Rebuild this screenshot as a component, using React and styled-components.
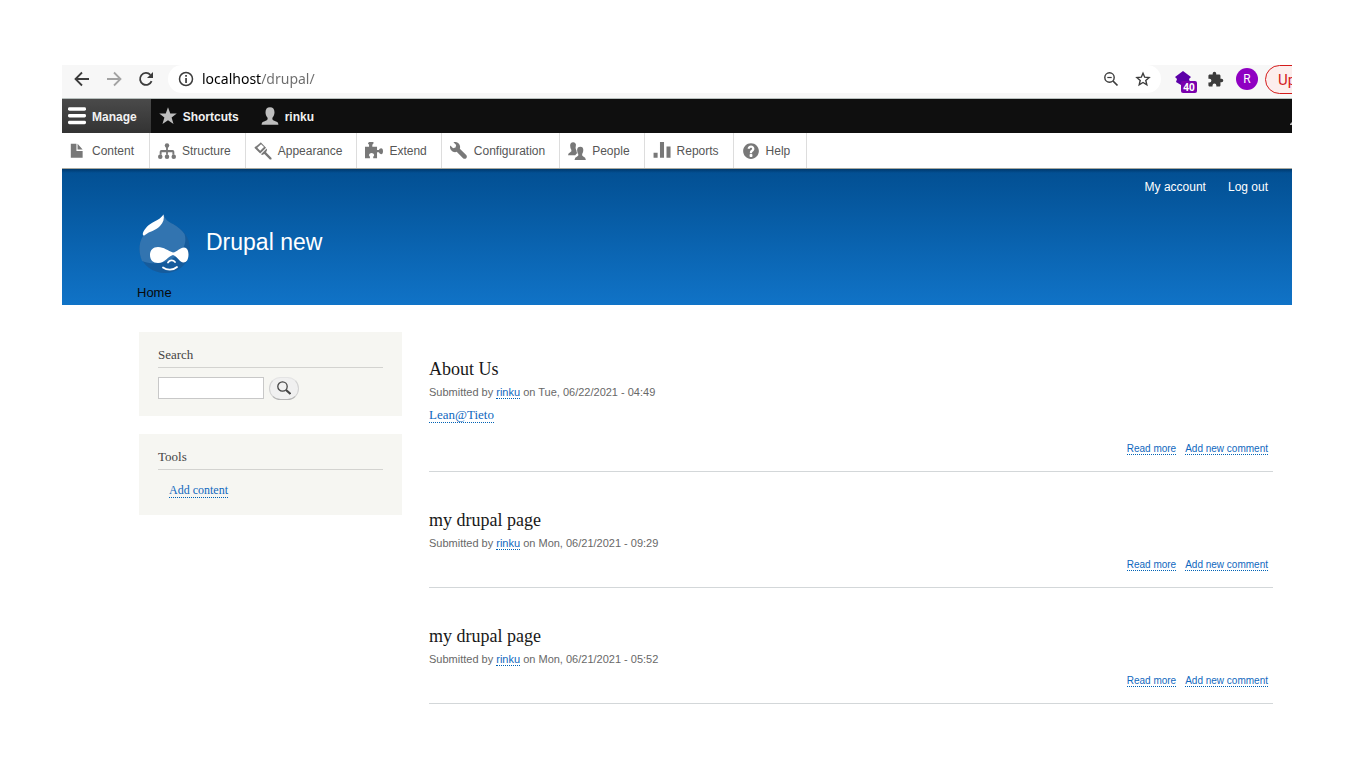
import React from 'react'
import styled, { createGlobalStyle, css } from 'styled-components'

const GlobalStyle = createGlobalStyle`
    *, *::before, *::after {
        box-sizing: border-box;
    }

    body {
        margin: 0;
        background: #fff;
        font-family: 'Liberation Sans', Arial, sans-serif;
        font-size: 12px;
    }

    button, input {
        font: inherit;
    }

    h1, h2, p, ul {
        margin: 0;
        padding: 0;
        font-weight: normal;
    }

    ul {
        list-style: none;
    }
`

const Page = styled.div`
    padding: 65px 74px 64px 62px;
`

const Screen = styled.div`
    overflow: hidden;
`

/* ---------- browser toolbar ---------- */

const Browser = styled.div`
    display: flex;
    height: 34px;
    background: #f7f7f7;
    border-bottom: 1px solid #b7bfbd;
    padding-left: 4px;
`

const BrowserButton = styled.button`
    position: relative;
    display: flex;
    align-items: center;
    justify-content: center;
    width: 32px;
    height: 28px;
    flex-shrink: 0;
    padding: 0;
    border: 0;
    background: none;
    color: ${props => props.$muted ? '#a3a3a3' : '#3c3c3c'};
`

const AddressBar = styled.div`
    display: flex;
    align-items: center;
    flex: 1;
    min-width: 0;
    height: 28px;
    margin: 0 6px;
    padding: 0 2px;
    border-radius: 14px;
    background: #fff;
`

/* host is darker than the path after it */
const Address = styled.input`
    flex: 1;
    min-width: 0;
    height: 28px;
    padding: 0 0 1px;
    border: 0;
    outline: 0;
    font-family: 'Noto Sans', 'Open Sans', sans-serif;
    font-size: 14px;
    color: transparent;
    background: linear-gradient(90deg, #000 59px, #6c6c6c 59px);
    -webkit-background-clip: text;
            background-clip: text;
`

const Count = styled.span`
    position: absolute;
    left: 14px;
    top: 16px;
    width: 16px;
    height: 12px;
    border-radius: 2px;
    background: #7a00ad;
    color: #fff;
    font-family: 'Noto Sans', sans-serif;
    font-size: 10px;
    font-weight: bold;
    line-height: 12px;
    text-align: center;
`

const Avatar = styled.span`
    width: 22px;
    height: 22px;
    border-radius: 50%;
    background: #8f00c2;
    color: #fff;
    font-family: Roboto, sans-serif;
    font-size: 12px;
    line-height: 22px;
    text-align: center;
`

const UpdateClip = styled.div`
    width: 27px;
    margin-left: 2px;
    flex-shrink: 0;
    overflow: hidden;
`

const Update = styled.button`
    height: 29px;
    padding: 0 12px;
    border: 1px solid #d31b1b;
    border-radius: 15px;
    background: #fceeed;
    color: #d31b1b;
    font-family: Roboto, sans-serif;
    font-size: 15px;
`

/* ---------- drupal admin toolbar ---------- */

const AdminBar = styled.nav`
    display: flex;
    height: 34px;
    background: #0f0f0f;
`

const AdminTab = styled.a`
    display: flex;
    align-items: center;
    gap: 6px;
    padding: 2px 14px 0 8px;
    color: #f2f2f2;
    font-weight: bold;
    text-decoration: none;

    svg {
        color: #bebebe;
        margin-top: -2px;
    }

    ${props => props.$active && css`
        padding-left: 6px;
        background: linear-gradient(#4a4a4a, #333);

        svg {
            color: #fff;
        }
    `}
`

const Tray = styled.nav`
    display: flex;
    height: 36px;
    background: #fff;
    border-bottom: 1px solid #a9a99f;
`

const TrayLink = styled.a`
    display: flex;
    align-items: center;
    gap: 6px;
    padding: 0 14px 0 8px;
    border-right: 1px solid #ddd;
    color: #565656;
    text-decoration: none;

    &:first-child {
        padding: 0 15px 0 6px;
    }

    &:last-child {
        padding-right: 16px;
    }

    svg {
        color: #787878;
    }
`

const Toggle = styled.button`
    width: 2px;
    height: 34px;
    margin-left: auto;
    padding: 10px 0 0;
    border: 0;
    background: none;
    color: #bebebe;
    overflow: hidden;
`

/* ---------- site header ---------- */

const Header = styled.header`
    height: 136px;
    padding: 9px 24px 0 75px;
    background: linear-gradient(#00396d, rgba(0, 79, 145, 0) 4px), linear-gradient(#024f92, #1073c7);
`

const UserMenu = styled.nav`
    display: flex;
    justify-content: flex-end;
    gap: 22px;
    height: 18px;
    line-height: 18px;

    a {
        color: #fff;
        text-decoration: none;
    }
`

const Branding = styled.a`
    display: flex;
    align-items: center;
    gap: 14px;
    margin-top: 16px;
    color: #fff;
    text-decoration: none;
`

const SiteName = styled.h1`
    padding-bottom: 3px;
    font-size: 23px;
    line-height: 28px;
`

const HomeLink = styled.a`
    display: inline-block;
    margin-top: 10px;
    color: #0a0a0a;
    font-size: 13px;
    line-height: 18px;
    text-decoration: none;
`

/* ---------- content ---------- */

const Main = styled.main`
    display: grid;
    grid-template-columns: 263fr 844fr;
    gap: 27px;
    padding: 27px 19px 0 77px;
`

const Sidebar = styled.aside`
    display: flex;
    flex-direction: column;
    gap: 18px;
`

const Block = styled.section`
    padding: 14px 19px 16px;
    background: #f6f6f2;
`

const BlockTitle = styled.h2`
    margin-bottom: 9px;
    padding-bottom: 3px;
    border-bottom: 1px solid #d3d3d0;
    color: #444;
    font-family: 'Liberation Serif', Georgia, serif;
    font-size: 13px;
    line-height: 18px;
`

const SearchForm = styled.form`
    display: flex;
    gap: 5px;
`

const SearchInput = styled.input`
    width: 106px;
    height: 22px;
    border: 1px solid #c8c8c8;
    background: #fff;
`

const SearchButton = styled.button`
    display: flex;
    align-items: center;
    justify-content: center;
    width: 30px;
    height: 23px;
    padding: 0 0 2px;
    border: 1px solid #d2d2d2;
    border-top-color: #e4e4e4;
    border-bottom-color: #b4b4b4;
    border-radius: 12px;
    background: #f0f0f0;
    color: #444;
`

const DottedLink = styled.a`
    border-bottom: 1px dotted #0062b5;
    color: #0f68be;
    text-decoration: none;
`

const ToolList = styled.ul`
    padding: 2px 0 0 11px;
    font-family: 'Liberation Serif', Georgia, serif;
    font-size: 12px;
    line-height: 18px;

    a {
        display: inline-block;
        line-height: 14px;
    }
`

const Posts = styled.div`
    padding-top: 26px;
`

const Article = styled.article`
    padding-bottom: 16px;
    border-bottom: 1px solid #d3d7d9;

    & + & {
        margin-top: 37px;
    }
`

const PostTitle = styled.h2`
    color: #181818;
    font-family: 'Liberation Serif', Georgia, serif;
    font-size: 18px;
    line-height: 22px;
`

const Submitted = styled.p`
    margin-top: 4px;
    color: #686868;
    font-size: 11px;
    line-height: 16px;
`

const Body = styled.p`
    margin: 7px 0 20px;
    font-family: 'Liberation Serif', Georgia, serif;
    font-size: 13px;
    line-height: 16px;
`

const PostLinks = styled.ul`
    display: flex;
    justify-content: flex-end;
    gap: 9px;
    margin-top: 8px;
    padding-right: 5px;
    font-size: 10px;
    line-height: 12px;
`

const Icon = ({ children, size = 18, box = 16 }) => (
    <svg width={size} height={size} viewBox={`0 0 ${box} ${box}`} fill='currentColor' aria-hidden='true'>
        {children}
    </svg>
)

const stroke = { fill: 'none', stroke: 'currentColor', strokeWidth: 1.8 }

const trayItems = [
    {
        label: 'Content',
        icon: <path d='M2.5 1.5h5v6.500h5.500v6h-10.500zM8.500 1.500l4.500 5.200h-4.500z' />
    },
    {
        label: 'Structure',
        icon: <>
            <circle cx='8' cy='3' r='2' />
            <path d='M7.2 4h1.6v3.2h4.2q1.5 0 1.5 1.5v2.6h-1.7v-2.3h-4v2.3h-1.6v-2.3h-4v2.3h-1.7v-2.6q0-1.5 1.5-1.5h4.2z' />
            <circle cx='2' cy='13' r='2' />
            <circle cx='8' cy='13' r='2' />
            <circle cx='14' cy='13' r='2' />
        </>
    },
    {
        label: 'Appearance',
        icon: <>
            <path fillRule='evenodd' d='M6 .3l4.7 4.8-5.2 5.1-5.2-5q1-.7.9-1.2.9 0 1.4-.9.8 0 1-.8.9 0 1.2-.9.8-.1 1.2-1.1zM6.3 2.1l-3.4 3.1 2.600 2.500 3.400-3.200z' />
            <path d='M11.3 5.7l-5.1 5.1 1 .7 2-.8 4.9 4.8q1 .4 1.4-.2.4-.7-.1-1.3l-4.7-5 .9-2z' />
        </>
    },
    {
        label: 'Extend',
        icon: <path d='M3.5 0h4v1.4l-1 1v1.8h4.2v3h1.6q.5-1.6 2-1.6 1.7 0 1.7 2.6t-1.7 2.6q-1.5 0-2-1.6h-1.6v5.2h-3.4v-1.4q1-.7.8-1.7-.4-1.5-2.3-1.5t-2.2 1.5q-.2 1 .8 1.7v1.4h-4.400v-10.200h3.600v-1.800l-1-1z' />
    },
    {
        label: 'Configuration',
        icon: <path d='M14.416 11.586l-5.666-5.665c.15-.449.252-.921.252-1.421 0-2.485-2.016-4.5-4.502-4.5-.505 0-.981.102-1.434.255l2.431 2.431-.588 2.196-2.196.588-2.445-2.445c-.162.464-.268.956-.268 1.475 0 2.486 2.014 4.5 4.5 4.5.5 0 .972-.102 1.421-.251l5.667 5.665c.781.781 2.047.781 2.828 0s.781-2.047 0-2.828z' />
    },
    {
        label: 'People',
        icon: <>
            <path d='M7.6 9.2q.3-1.2-.5-2.6-.6-1.5-.1-3.5.4-1-.5-2-.8-1-2-.9-2.6.2-2.6 3 0 2.4 1.1 3.8.5 1.4-1 2-2 .7-2 2.8h6.5q.8-1.6 2.2-2z' />
            <path d='M11 4.2q2.6 0 2.6 3 0 2.2-1 3.5-.5 1.5 1 2.1 2.1.7 2.3 3.1h-10.1q.2-2.4 2.3-3.1 1.6-.6 1-2.1-1-1.3-1-3.500 0-3 2.900-3z' />
        </>
    },
    {
        label: 'Reports',
        icon: <path d='M.5 9.5h3.6v4.5h-3.6zM6.2 0h3.6v14h-3.6zM12 4h3.6v10h-3.6z' />
    },
    {
        label: 'Help',
        icon: <path d='M8.002 1c-3.868 0-7.002 3.134-7.002 7s3.134 7 7.002 7c3.865 0 7-3.134 7-7s-3.135-7-7-7zm3 5c0 .551-.16 1.085-.477 1.586l-.158.22c-.07.093-.189.241-.361.393-.168.148-.35.299-.545.447l-.203.189-.141.129-.096.17-.021.235v.63h-2.001v-.704c.026-.396.078-.73.204-.999.125-.269.271-.498.439-.688l.225-.21.166-.155.137-.128c.186-.139.357-.277.516-.417l.148-.18c.098-.152.168-.323.168-.518 0-.552-.447-1-1-1s-1.002.448-1.002 1h-2c0-1.657 1.343-3 3-3 1.659 0 3.002 1.343 3.002 3zm-1.75 6.619c0 .344-.281.625-.625.625h-1.25c-.345 0-.626-.281-.626-.625v-1.238c0-.344.281-.625.626-.625h1.25c.344 0 .625.281.625.625v1.238z' />
    }
]

const posts = [
    { id: 1, title: 'About Us', date: 'Tue, 06/22/2021 - 04:49', body: 'Lean@Tieto' },
    { id: 2, title: 'my drupal page', date: 'Mon, 06/21/2021 - 09:29' },
    { id: 3, title: 'my drupal page', date: 'Mon, 06/21/2021 - 05:52' }
]

const Logo = () => (
    <svg width='55' height='62' viewBox='0 0 55 62' aria-hidden='true'>
        <path fill='#155b9c' d='M26.500 2c1 5 5 8 9.500 10 10 6 17 13 17 25 0 14-11 24-25 24S2.500 51 2.500 37c0-10 5-17 12.500-22 6-4 10-7 11.500-13z' />
        <path fill='#3274b0' d='M26.500 2c1 5 5 8 9.500 10 5 3 9 6 11.500 10 3 9-2 18-9.500 23-10 7-23 8-33 4-1.500-4-2.500-8-2.500-12 0-10 5-17 12.500-22 6-4 10-7 11.500-13z' />
        <path fill='#fff' d='M26.500 2.500c1 4 0 8-3.500 11.500-5 5-10 5-15 9-2 1.500-3-.5-1.500-3.500 3-5 6-7.500 11-10 4-2 7-4 9-7z' />
        <path fill='#fff' d='M21 35c6 0 10 4 15 5.500 4-.5 7-5 11-5 3 0 4.500 3 4.500 7 0 5-2 8-5 8-4 0-6-6-10.500-7.500-5 1-8 8-15 8-5 0-8-3-8-8s3-8 8-8z' />
        <path {...stroke} stroke='#fff' strokeLinecap='round' d='M31 50.500c1.500-2.500 5-3 7-.5M26 55.500c4 3 10 3 14-.5' />
    </svg>
)

const BrowserToolbar = () => (
    <Browser>
        <BrowserButton aria-label='Back'>
            <Icon size={18} box={18}><path {...stroke} d='M16 9H3M9 2.5L2.5 9 9 15.5' /></Icon>
        </BrowserButton>
        <BrowserButton aria-label='Forward' $muted>
            <Icon size={18} box={18}><path {...stroke} d='M2 9h13M9 2.5L15.5 9 9 15.5' /></Icon>
        </BrowserButton>
        <BrowserButton aria-label='Reload'>
            <Icon size={18} box={18}>
                <path {...stroke} d='M14.6 11.2A6 6 0 1 1 13.4 4.8' />
                <path d='M16 2v6h-6z' />
            </Icon>
        </BrowserButton>
        <AddressBar>
            <BrowserButton aria-label='Site information'>
                <Icon size={16} box={16}>
                    <circle {...stroke} strokeWidth='1.5' cx='8' cy='8' r='6.5' />
                    <path d='M7.2 7h1.7v5h-1.7zM7.2 4h1.7v1.7h-1.7z' />
                </Icon>
            </BrowserButton>
            <Address aria-label='Address' defaultValue='localhost/drupal/' spellCheck={false} />
            <BrowserButton aria-label='Zoom'>
                <Icon size={16} box={16}>
                    <circle {...stroke} strokeWidth='1.4' cx='6.5' cy='6.5' r='4.7' />
                    <path {...stroke} strokeWidth='1.2' d='M4.3 6.5h4.4' />
                    <path {...stroke} strokeWidth='1.7' d='M10 10l4.5 4.5' />
                </Icon>
            </BrowserButton>
            <BrowserButton aria-label='Bookmark'>
                <Icon size={16} box={16}>
                    <path {...stroke} strokeWidth='1.4' d='M8 2.2l1.7 4 4.4.4-3.3 2.9 1 4.3L8 11.5l-3.8 2.3 1-4.3-3.3-2.9 4.4-.4z' />
                </Icon>
            </BrowserButton>
        </AddressBar>
        <BrowserButton aria-label='Extension, 40 items'>
            <Icon size={18} box={18}>
                <path fill='#5c00a8' d='M9 1l8 6-2 2 1 3-5 3H7l-5-3 1-3-2-2z' />
            </Icon>
            <Count>40</Count>
        </BrowserButton>
        <BrowserButton aria-label='Extensions'>
            <Icon size={17} box={24}>
                <path d='M20.5 11H19V7c0-1.1-.9-2-2-2h-4V3.5a2.5 2.5 0 0 0-5 0V5H4c-1.1 0-2 .9-2 2v3.8h1.5a2.7 2.7 0 0 1 0 5.4H2V20c0 1.1.9 2 2 2h3.8v-1.5a2.7 2.7 0 0 1 5.4 0V22H17c1.1 0 2-.9 2-2v-4h1.5a2.5 2.5 0 0 0 0-5z' />
            </Icon>
        </BrowserButton>
        <BrowserButton aria-label='Profile'><Avatar>R</Avatar></BrowserButton>
        <UpdateClip><Update>Update</Update></UpdateClip>
    </Browser>
)

const AdminToolbar = () => (
    <>
        <AdminBar aria-label='Administration'>
            <AdminTab href='#manage' $active>
                <Icon>
                    <rect y='.3' width='16' height='3.1' rx='1.3' />
                    <rect y='6.3' width='16' height='3.1' rx='1.3' />
                    <rect y='12.3' width='16' height='3.1' rx='1.3' />
                </Icon>
                Manage
            </AdminTab>
            <AdminTab href='#shortcuts'>
                <Icon><path d='M8 .3l2 5.5h5.8l-4.6 3.5 1.7 5.9L8 11.7l-4.9 3.5 1.7-5.9L.2 5.8H6z' /></Icon>
                Shortcuts
            </AdminTab>
            <AdminTab href='#rinku'>
                <Icon><path d='M8 .3c2.7 0 4 1.8 4 4.3 0 2-.7 3.5-1.7 4.7-.6 1.6 0 2.3 1.5 2.9 2.3.8 3.5 1.2 3.7 3.5H.5c.2-2.3 1.4-2.7 3.7-3.5 1.5-.6 2.1-1.3 1.5-2.9C4.7 8.1 4 6.6 4 4.6 4 2.1 5.3.3 8 .3z' /></Icon>
                rinku
            </AdminTab>
            <Toggle aria-label='Vertical orientation'>
                <Icon size={8} box={8}><path d='M0 7l2-2v3H0z' /></Icon>
            </Toggle>
        </AdminBar>
        <Tray aria-label='Manage'>
            {trayItems.map(item => (
                <TrayLink key={item.label} href={`#${item.label.toLowerCase()}`}>
                    <Icon>{item.icon}</Icon>
                    {item.label}
                </TrayLink>
            ))}
        </Tray>
    </>
)

const Post = ({ post }) => (
    <Article>
        <PostTitle>{post.title}</PostTitle>
        <Submitted>
            Submitted by <DottedLink href='#rinku'>rinku</DottedLink> on {post.date}
        </Submitted>
        {post.body && <Body><DottedLink href='#lean'>{post.body}</DottedLink></Body>}
        <PostLinks>
            <li><DottedLink href={`#node-${post.id}`}>Read more</DottedLink></li>
            <li><DottedLink href={`#comment-${post.id}`}>Add new comment</DottedLink></li>
        </PostLinks>
    </Article>
)

const App = () => {
    return (
    <Page>
        <GlobalStyle />
        <Screen>
            <BrowserToolbar />
            <AdminToolbar />
            <Header>
                <UserMenu>
                    <a href='#account'>My account</a>
                    <a href='#logout'>Log out</a>
                </UserMenu>
                <Branding href='#home'>
                    <Logo />
                    <SiteName>Drupal new</SiteName>
                </Branding>
                <HomeLink href='#home'>Home</HomeLink>
            </Header>
            <Main>
                <Sidebar>
                    <Block>
                        <BlockTitle>Search</BlockTitle>
                        <SearchForm onSubmit={e => e.preventDefault()}>
                            <SearchInput type='search' aria-label='Search' />
                            <SearchButton aria-label='Submit search'>
                                <Icon size={14} box={14}>
                                    <circle {...stroke} strokeWidth='1.3' cx='5.5' cy='5.5' r='4.7' />
                                    <path {...stroke} strokeWidth='2.2' d='M9 9l4.5 4' />
                                </Icon>
                            </SearchButton>
                        </SearchForm>
                    </Block>
                    <Block>
                        <BlockTitle>Tools</BlockTitle>
                        <ToolList>
                            <li><DottedLink href='#add'>Add content</DottedLink></li>
                        </ToolList>
                    </Block>
                </Sidebar>
                <Posts>
                    {posts.map(post => <Post key={post.id} post={post} />)}
                </Posts>
            </Main>
        </Screen>
    </Page>
    )
}

export default App
